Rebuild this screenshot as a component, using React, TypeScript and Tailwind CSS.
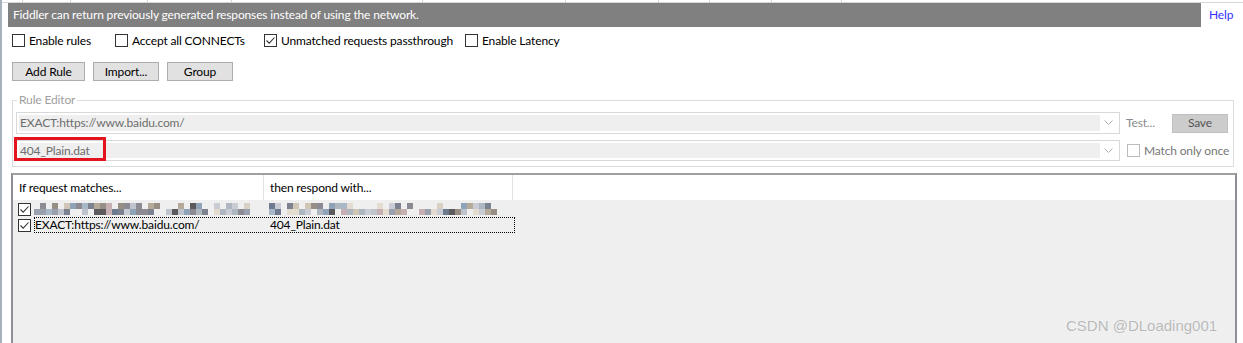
import React from "react";

const font = "font-['Lato','Noto_Sans',sans-serif]";

function Check({ checked = false, light = false }: { checked?: boolean; light?: boolean }) {
  return (
    <span
      className={`inline-flex h-[13px] w-[13px] shrink-0 items-center justify-center border bg-white ${
        light ? "border-[#bcbcbc]" : "border-[#333333]"
      }`}
    >
      {checked && (
        <svg width="11" height="11" viewBox="0 0 11 11">
          <path d="M1.5 5.5 L4.2 8.2 L9.5 2.5" fill="none" stroke="#333" strokeWidth="1.1" />
        </svg>
      )}
    </span>
  );
}

function Chevron() {
  return (
    <svg width="9" height="6" viewBox="0 0 9 6">
      <path d="M0.5 0.5 L4.5 4.5 L8.5 0.5" fill="none" stroke="#b0b0b0" strokeWidth="1" />
    </svg>
  );
}

function rand(seed: number) {
  let s = seed;
  return () => {
    s = (s * 9301 + 49297) % 233280;
    return s / 233280;
  };
}

const palette = [
  "#c9ccd4", "#9aa0ad", "#7d8290", "#b5aa9a", "#d9d0c4", "#5d5a5e", "#a9b8c9",
  "#8c8a93", "#cfc6b5", "#6e7b8f", "#bfc3cb", "#e3dccf", "#978f86", "#aeb7bf",
  "#c7b0b4", "#8fa3b8",
];

function Mosaic({ seed, width }: { seed: number; width: number }) {
  const r = rand(seed);
  const n = Math.floor(width / 6);
  const top: (string | null)[] = [];
  const bottom: (string | null)[] = [];
  for (let i = 0; i < n; i++) {
    top.push(r() < 0.45 ? palette[Math.floor(r() * palette.length)] : null);
    bottom.push(r() < 0.85 ? palette[Math.floor(r() * palette.length)] : null);
  }
  return (
    <div className="flex flex-col">
      <div className="flex h-[6px]">
        {top.map((c, i) => (
          <span key={i} className="h-[6px] w-[6px]" style={{ background: c ?? "transparent" }} />
        ))}
      </div>
      <div className="flex h-[6px]">
        {bottom.map((c, i) => (
          <span key={i} className="h-[6px] w-[6px]" style={{ background: c ?? "transparent" }} />
        ))}
      </div>
    </div>
  );
}

export default function App() {
  return (
    <div className={`relative h-[343px] w-[1243px] overflow-hidden whitespace-nowrap bg-white text-[12px] tracking-[-0.15px] ${font}`}>
      <div className="flex h-full border-l-2 border-[#a7b1bd]">
        <div className="flex min-w-0 flex-1 flex-col">
          {/* tab strip remnant */}
          <div className="flex h-[3px] border-b border-[#d6d6d6]">
            <span className="w-[21px] border-r border-[#d6d6d6]" />
            <span className="w-[48px] border-r border-[#d6d6d6]" />
            <span className="w-[77px] border-r border-[#d6d6d6]" />
            <span className="w-[84px] border-r border-[#d6d6d6]" />
            <span className="w-[191px] border-r border-[#d6d6d6]" />
            <span className="w-[143px] border-r border-[#d6d6d6]" />
            <span className="w-[93px] border-r border-[#d6d6d6]" />
            <span className="w-[51px] border-r border-[#d6d6d6]" />
            <span className="w-[62px] border-r border-[#d6d6d6]" />
            <span className="w-[70px] border-r border-[#d6d6d6]" />
          </div>

          {/* banner */}
          <div className="ml-[6px] flex h-[24px] items-center">
            <div className="flex h-[24px] w-[1193px] items-center bg-[#808080] pl-[5px] text-white">
              Fiddler can return previously generated responses instead of using the network.
            </div>
            <span className="ml-[8px] text-[#3333ff]">Help</span>
          </div>

          {/* checkboxes */}
          <div className="ml-[10px] mt-[7px] flex h-[13px] items-center text-[#000]">
            <Check />
            <span className="ml-[4px] w-[86px]">Enable rules</span>
            <Check />
            <span className="ml-[4px] w-[132px]">Accept all CONNECTs</span>
            <Check checked />
            <span className="ml-[4px] w-[184px]">Unmatched requests passthrough</span>
            <Check />
            <span className="ml-[4px]">Enable Latency</span>
          </div>

          {/* buttons */}
          <div className="ml-[10px] mt-[15px] flex gap-[8px] text-black">
            <div className="flex h-[19px] w-[73px] items-center justify-center border border-[#adadad] bg-[#e1e1e1]">
              Add Rule
            </div>
            <div className="flex h-[19px] w-[66px] items-center justify-center border border-[#adadad] bg-[#e1e1e1]">
              Import...
            </div>
            <div className="flex h-[19px] w-[66px] items-center justify-center border border-[#adadad] bg-[#e1e1e1]">
              Group
            </div>
          </div>

          {/* Rule editor group */}
          <div className="relative ml-[10px] mt-[19px] h-[67px] w-[1222px] border border-[#dcdcdc]">
            <span className="absolute left-[4px] top-[-9px] bg-white px-[2px] leading-[16px] text-[#a0a0a0]">
              Rule Editor
            </span>
            <div className="ml-[3px] mt-[11px] flex h-[22px] items-center">
              <div className="flex h-[22px] w-[1104px] items-center border border-[#d9d9d9] bg-white p-[2px]">
                <div className="flex h-full flex-1 items-center bg-[#efefef] pl-[1px] text-[#6d6d6d]">
                  EXACT:https://www.baidu.com/
                </div>
                <div className="flex w-[17px] justify-center">
                  <Chevron />
                </div>
              </div>
              <span className="ml-[6px] text-[#8a8a8a]">Test...</span>
              <div className="ml-[17px] flex h-[19px] w-[56px] items-center justify-center border border-[#c0c0c0] bg-[#cccccc] text-[#555]">
                Save
              </div>
            </div>
            <div className="ml-[3px] mt-[6px] flex h-[21px] items-center">
              <div className="flex h-[21px] w-[1104px] items-center border border-[#d9d9d9] bg-white p-[2px]">
                <div className="flex h-full flex-1 items-center bg-[#efefef] pl-[1px] text-[#6d6d6d]">
                  404_Plain.dat
                </div>
                <div className="flex w-[17px] justify-center">
                  <Chevron />
                </div>
              </div>
              <span className="ml-[7px] flex">
                <Check light />
              </span>
              <span className="ml-[4px] text-[#777]">Match only once</span>
            </div>
            {/* red highlight */}
            <div className="absolute left-[1px] top-[36px] h-[24px] w-[92px] border-[3px] border-[#e3141e]" />
          </div>

          {/* list view */}
          <div className="ml-[9px] mt-[6px] flex w-[1226px] flex-1 flex-col border-l-2 border-r-2 border-t-2 border-l-[#8e8e96] border-r-[#8e8e96] border-t-[#a0a0a0] bg-[#efefef]">
            <div className="flex h-[25px] bg-white text-black">
              <div className="flex w-[251px] items-center border-r border-[#e2e2e2] pl-[6px]">
                If request matches...
              </div>
              <div className="flex w-[249px] items-center border-r border-[#e2e2e2] pl-[6px]">
                then respond with...
              </div>
            </div>
            <div className="ml-[5px] mt-[1px] flex h-[16px] items-center">
              <Check checked />
              <div className="ml-[3px] w-[235px]">
                <Mosaic seed={7} width={216} />
              </div>
              <div className="w-[240px]">
                <Mosaic seed={31} width={228} />
              </div>
            </div>
            <div className="ml-[5px] flex h-[16px] items-center">
              <Check checked />
              <div className="ml-[3px] flex h-[16px] w-[481px] items-center border border-dotted border-black text-black">
                <span className="w-[235px]">EXACT:https://www.baidu.com/</span>
                <span>404_Plain.dat</span>
              </div>
            </div>
          </div>
        </div>
      </div>

      {/* watermark */}
      <div className="absolute left-[1066px] top-[315px] text-[15px] tracking-normal text-[#b8b8b8] [text-shadow:0_0_1px_#fff] font-['Liberation_Sans',sans-serif]">
        CSDN @DLoading001
      </div>
    </div>
  );
}
